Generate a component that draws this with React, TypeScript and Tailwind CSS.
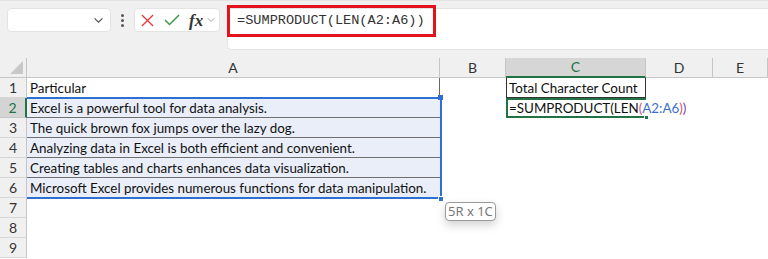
import React from 'react';

const data = [
  'Excel is a powerful tool for data analysis.',
  'The quick brown fox jumps over the lazy dog.',
  'Analyzing data in Excel is both efficient and convenient.',
  'Creating tables and charts enhances data visualization.',
  'Microsoft Excel provides numerous functions for data manipulation.',
];

const cols = ['A', 'B', 'C', 'D', 'E'];
const gridCols = 'grid grid-cols-[27px_413px_66px_140px_67px_1fr] grid-rows-[20px]';
const cellFont = { fontFamily: 'Lato, "Liberation Sans", sans-serif' };

function Chevron({ className }: { className?: string }) {
  return (
    <svg viewBox="0 0 12 8" className={className} fill="none" stroke="currentColor" strokeWidth="1.3">
      <path d="M1.5 1.5 L6 6 L10.5 1.5" />
    </svg>
  );
}

function Toolbar() {
  return (
    <div className="h-[58px] bg-[#f0f0f0] border-t border-[#e4e4e4] flex items-start pl-[7px] pt-[7px]">
      {/* Name box */}
      <div className="w-[104px] h-[24px] bg-white rounded-[4px] border border-[#e3e3e3] flex items-center justify-end pr-[6px]">
        <Chevron className="w-[11px] h-[7px] text-[#505050]" />
      </div>
      <div className="w-[23px] flex flex-col items-center justify-center gap-[2px] h-[24px]">
        <span className="w-[3px] h-[3px] bg-[#555] rounded-full" />
        <span className="w-[3px] h-[3px] bg-[#555] rounded-full" />
        <span className="w-[3px] h-[3px] bg-[#555] rounded-full" />
      </div>
      {/* Cancel / enter / fx */}
      <div className="w-[86px] h-[24px] bg-white rounded-[4px] border border-[#e3e3e3] flex items-center pl-[6px]">
        <svg viewBox="0 0 14 14" className="w-[13px] h-[13px]" fill="none" stroke="#e0393e" strokeWidth="1.4">
          <path d="M1 1 L13 13 M13 1 L1 13" />
        </svg>
        <svg viewBox="0 0 16 12" className="w-[16px] h-[12px] ml-[10px]" fill="none" stroke="#3d9a4c" strokeWidth="1.5">
          <path d="M1 6 L5.5 10.5 L15 1" />
        </svg>
        <span className="ml-[9px] text-[17px] leading-none italic font-bold text-[#333]" style={{ fontFamily: '"Liberation Serif", serif' }}>fx</span>
        <Chevron className="w-[10px] h-[6px] ml-[3px] text-[#a0a0a0]" />
      </div>
      {/* Formula bar */}
      <div className="relative ml-[7px] flex-1 h-[42px] bg-white rounded-l-[5px] border border-r-0 border-[#e3e3e3]">
        <div className="pl-[9px] pt-[3px] text-[13.6px] leading-[18px] text-[#333]" style={{ fontFamily: '"Liberation Mono", monospace' }}>
          =SUMPRODUCT(LEN(A2:A6))
        </div>
        <div className="absolute left-[-1px] top-[-4px] w-[209px] h-[32px] border-[3px] border-[#e2131c]" />
      </div>
    </div>
  );
}

function HeaderRow() {
  return (
    <div className={`${gridCols} h-[20px] bg-[#f0f0f0] leading-[18px]`}>
      <div className="relative border-r border-b border-[#c6c6c6]">
        <div className="absolute right-[3px] bottom-[3px] w-0 h-0 border-l-[13px] border-l-transparent border-b-[13px] border-b-[#c8c8c8]" />
      </div>
      {cols.map((c) => (
        <div
          key={c}
          className={
            c === 'C'
              ? 'bg-[#d6d6d6] border-r border-[#c6c6c6] border-b-2 border-b-[#217346] text-[#217346] flex items-center justify-center text-[14px]'
              : 'border-r border-b border-[#c6c6c6] text-[#333] flex items-center justify-center text-[14px]'
          }
          style={cellFont}
        >
          {c}
        </div>
      ))}
    </div>
  );
}

function RowHead({ n }: { n: number }) {
  const active = n === 2;
  return (
    <div
      className={
        active
          ? 'bg-[#d4d4d4] border-b border-[#c6c6c6] border-r-2 border-r-[#217346] text-[#217346] flex items-center justify-center text-[14px]'
          : 'bg-[#f0f0f0] border-b border-[#d6d6d6] border-r border-r-[#c6c6c6] text-[#333] flex items-center justify-center text-[14px]'
      }
      style={cellFont}
    >
      {n}
    </div>
  );
}

export default function App() {
  return (
    <div className="w-[768px] h-[259px] overflow-hidden bg-white">
      <Toolbar />
      <HeaderRow />
      <div className="relative text-[13.4px] leading-[18px] text-[#111]" style={cellFont}>
        {/* Row 1 */}
        <div className={`${gridCols} h-[20px]`}>
          <RowHead n={1} />
          <div className="border-r border-[#666] flex items-center pl-[3px]">Particular</div>
          <div />
          <div className="border-r border-b border-l border-[#333] flex items-center pl-[2px] whitespace-nowrap">Total Character Count</div>
          <div />
          <div />
        </div>
        {/* Rows 2-6 */}
        {data.map((t, i) => (
          <div key={t} className={`${gridCols} h-[20px]`}>
            <RowHead n={i + 2} />
            <div className={`bg-[#e9eef8] flex items-center pl-[3px] whitespace-nowrap ${i < 4 ? 'border-b border-[#6f6f6f]' : ''}`}>{t}</div>
            <div />
            {i === 0 ? (
              <div className="relative border-l-2 border-t-2 border-b-2 border-[#217346] flex items-center pl-[1px] whitespace-nowrap z-10">
                <span>=SUMPRODUCT(LEN</span>
                <span className="text-[#d2527c]">(</span>
                <span className="text-[#3a6fd0]">A2:A6</span>
                <span className="text-[#d2527c]">)</span>
                <span className="text-[#7a3fa0]">)</span>
                <span className="ml-[1px] w-px h-[15px] bg-[#111]" />
                <span className="absolute right-[-3px] bottom-[-4px] w-[5px] h-[5px] bg-[#217346] border border-white" />
              </div>
            ) : (
              <div />
            )}
            <div />
            <div />
          </div>
        ))}
        {/* Rows 7-9 */}
        {[7, 8, 9].map((n) => (
          <div key={n} className={`${gridCols} h-[20px]`}>
            <RowHead n={n} />
            <div />
            <div />
            <div />
            <div />
            <div />
          </div>
        ))}

        {/* Selection A2:A6 */}
        <div className="absolute left-[27px] top-[19px] w-[415px] h-[102px] border-t-2 border-r-2 border-b-2 border-[#2f6fd3] pointer-events-none" />
        <div className="absolute left-[438px] top-[17px] w-[5px] h-[5px] bg-[#2f6fd3]" />
        <div className="absolute left-[438px] top-[118px] w-[6px] h-[6px] bg-[#2f6fd3] border border-white" />

        {/* Size tooltip */}
        <div className="absolute left-[445px] top-[124px] h-[19px] px-[2px] rounded-[4px] border border-[#9a9a9a] bg-white text-[13px] leading-[17px] text-[#777] shadow-[0_4px_10px_rgba(0,0,0,0.18)]" style={{ fontFamily: '"Noto Sans", sans-serif' }}>
          5R x 1C
        </div>
      </div>
    </div>
  );
}
